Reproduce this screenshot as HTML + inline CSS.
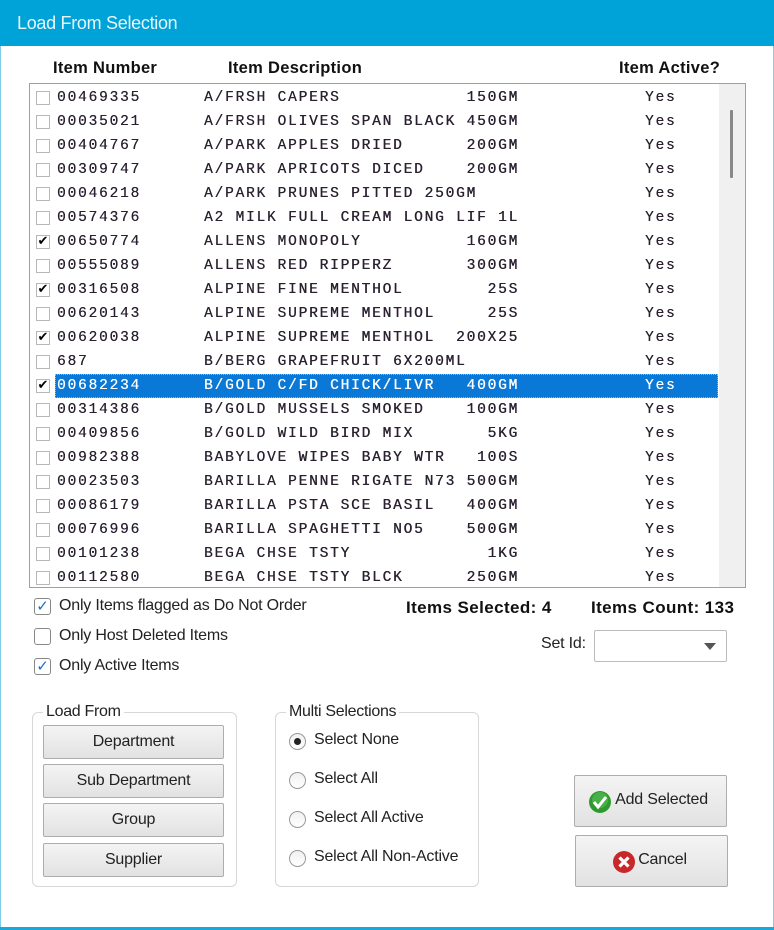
<!DOCTYPE html>
<html><head><style>
*{margin:0;padding:0;box-sizing:border-box}
body{width:774px;height:930px;background:#fff;position:relative;overflow:hidden;font-family:"Liberation Sans",sans-serif}
.a{position:absolute}
.title{left:0;top:0;width:774px;height:46px;background:#00a3d7;color:#e8f6fc;font-size:18px;padding:13px 0 0 17px;letter-spacing:-0.3px}
.hdr{font-weight:bold;font-size:16.5px;color:#111;top:59px;letter-spacing:0.3px}
.list{left:29px;top:83px;width:717px;height:505px;border:1px solid #a0a0a0;overflow:hidden}
.sb{left:689px;top:0;width:27px;height:503px;background:#f0f0f0}
.row{position:absolute;left:0;width:690px;height:24px;font-family:"Liberation Mono",monospace;font-size:14.5px;color:#2a2030;white-space:pre}
.row span{position:absolute;top:4px;letter-spacing:1.8px;text-shadow:0.3px 0 0 currentColor}
.cb{position:absolute;left:6px;top:5px;width:14px;height:14px;border:1px solid #b8b8b8;background:#fff;font-size:13px;line-height:12px;color:#000;font-family:"DejaVu Sans",sans-serif;text-align:center;letter-spacing:0!important}
.sel span{color:#fff}
.selbg{position:absolute;left:25px;top:0;width:663px;height:24px;background:#0a78d6;border:1px dotted #f0a050}
.lbl{font-size:16px;color:#222;letter-spacing:-0.2px}
.chk{width:17px;height:17px;border:1px solid #888;border-radius:3px;background:#fff;font-family:"DejaVu Sans",sans-serif;color:#1a70c8;font-size:15px;line-height:15px;text-align:center;font-weight:bold}
.btn{background:linear-gradient(#f4f4f4,#e2e2e2);border:1px solid #adadad;border-radius:2px;text-align:center;font-size:16px;color:#222;letter-spacing:-0.2px}
.grp{border:1px solid #d8d8d8;border-radius:6px}
.gl{background:#fff;padding:0 3px;font-size:16px;color:#222;letter-spacing:-0.3px}
.rad{width:17px;height:17px;border:1px solid #999;border-radius:50%;background:linear-gradient(#f0f0f0,#fff)}
.bold{font-weight:bold;font-size:17px;letter-spacing:0.4px;color:#111}
</style></head><body>
<div class="a title">Load From Selection</div>
<div class="a" style="left:0;top:46px;width:1px;height:884px;background:#7fcbe8"></div>
<div class="a" style="right:0;top:46px;width:1px;height:884px;background:#7fcbe8"></div>
<div class="a" style="left:0;top:927px;width:774px;height:3px;background:#1aa8da"></div>
<div class="a hdr" style="left:53px">Item Number</div>
<div class="a hdr" style="left:228px">Item Description</div>
<div class="a hdr" style="left:619px">Item Active?</div>
<div class="a list">
<div class="a sb"><div class="a" style="left:11px;top:26px;width:3px;height:68px;background:#888;border-radius:1px"></div></div>
<div class="row" style="top:2px"><div class="cb"></div><span style="left:27px">00469335</span><span style="left:174px">A/FRSH CAPERS            150GM</span><span style="left:615px">Yes</span></div>
<div class="row" style="top:26px"><div class="cb"></div><span style="left:27px">00035021</span><span style="left:174px">A/FRSH OLIVES SPAN BLACK 450GM</span><span style="left:615px">Yes</span></div>
<div class="row" style="top:50px"><div class="cb"></div><span style="left:27px">00404767</span><span style="left:174px">A/PARK APPLES DRIED      200GM</span><span style="left:615px">Yes</span></div>
<div class="row" style="top:74px"><div class="cb"></div><span style="left:27px">00309747</span><span style="left:174px">A/PARK APRICOTS DICED    200GM</span><span style="left:615px">Yes</span></div>
<div class="row" style="top:98px"><div class="cb"></div><span style="left:27px">00046218</span><span style="left:174px">A/PARK PRUNES PITTED 250GM</span><span style="left:615px">Yes</span></div>
<div class="row" style="top:122px"><div class="cb"></div><span style="left:27px">00574376</span><span style="left:174px">A2 MILK FULL CREAM LONG LIF 1L</span><span style="left:615px">Yes</span></div>
<div class="row" style="top:146px"><div class="cb">✔</div><span style="left:27px">00650774</span><span style="left:174px">ALLENS MONOPOLY          160GM</span><span style="left:615px">Yes</span></div>
<div class="row" style="top:170px"><div class="cb"></div><span style="left:27px">00555089</span><span style="left:174px">ALLENS RED RIPPERZ       300GM</span><span style="left:615px">Yes</span></div>
<div class="row" style="top:194px"><div class="cb">✔</div><span style="left:27px">00316508</span><span style="left:174px">ALPINE FINE MENTHOL        25S</span><span style="left:615px">Yes</span></div>
<div class="row" style="top:218px"><div class="cb"></div><span style="left:27px">00620143</span><span style="left:174px">ALPINE SUPREME MENTHOL     25S</span><span style="left:615px">Yes</span></div>
<div class="row" style="top:242px"><div class="cb">✔</div><span style="left:27px">00620038</span><span style="left:174px">ALPINE SUPREME MENTHOL  200X25</span><span style="left:615px">Yes</span></div>
<div class="row" style="top:266px"><div class="cb"></div><span style="left:27px">687</span><span style="left:174px">B/BERG GRAPEFRUIT 6X200ML</span><span style="left:615px">Yes</span></div>
<div class="row sel" style="top:290px"><div class="selbg"></div><div class="cb">✔</div><span style="left:27px">00682234</span><span style="left:174px">B/GOLD C/FD CHICK/LIVR   400GM</span><span style="left:615px">Yes</span></div>
<div class="row" style="top:314px"><div class="cb"></div><span style="left:27px">00314386</span><span style="left:174px">B/GOLD MUSSELS SMOKED    100GM</span><span style="left:615px">Yes</span></div>
<div class="row" style="top:338px"><div class="cb"></div><span style="left:27px">00409856</span><span style="left:174px">B/GOLD WILD BIRD MIX       5KG</span><span style="left:615px">Yes</span></div>
<div class="row" style="top:362px"><div class="cb"></div><span style="left:27px">00982388</span><span style="left:174px">BABYLOVE WIPES BABY WTR   100S</span><span style="left:615px">Yes</span></div>
<div class="row" style="top:386px"><div class="cb"></div><span style="left:27px">00023503</span><span style="left:174px">BARILLA PENNE RIGATE N73 500GM</span><span style="left:615px">Yes</span></div>
<div class="row" style="top:410px"><div class="cb"></div><span style="left:27px">00086179</span><span style="left:174px">BARILLA PSTA SCE BASIL   400GM</span><span style="left:615px">Yes</span></div>
<div class="row" style="top:434px"><div class="cb"></div><span style="left:27px">00076996</span><span style="left:174px">BARILLA SPAGHETTI NO5    500GM</span><span style="left:615px">Yes</span></div>
<div class="row" style="top:458px"><div class="cb"></div><span style="left:27px">00101238</span><span style="left:174px">BEGA CHSE TSTY             1KG</span><span style="left:615px">Yes</span></div>
<div class="row" style="top:482px"><div class="cb"></div><span style="left:27px">00112580</span><span style="left:174px">BEGA CHSE TSTY BLCK      250GM</span><span style="left:615px">Yes</span></div>
</div>

<div class="a chk" style="left:34px;top:598px">✓</div><div class="a lbl" style="left:59px;top:597px">Only Items flagged as Do Not Order</div>
<div class="a chk" style="left:34px;top:628px"></div><div class="a lbl" style="left:59px;top:627px">Only Host Deleted Items</div>
<div class="a chk" style="left:34px;top:658px">✓</div><div class="a lbl" style="left:59px;top:657px">Only Active Items</div>
<div class="a bold" style="left:406px;top:598px">Items Selected: 4</div>
<div class="a bold" style="left:591px;top:598px">Items Count: 133</div>
<div class="a lbl" style="left:541px;top:635px">Set Id:</div>
<div class="a" style="left:594px;top:630px;width:133px;height:32px;border:1px solid #bbb;border-radius:2px;background:#fff"><div class="a" style="left:109px;top:12px;width:0;height:0;border-left:6px solid transparent;border-right:6px solid transparent;border-top:7px solid #555"></div></div>

<div class="a grp" style="left:32px;top:712px;width:205px;height:175px"></div>
<div class="a gl" style="left:43px;top:703px">Load From</div>
<div class="a btn" style="left:43px;top:725px;width:181px;height:34px;padding-top:7px">Department</div>
<div class="a btn" style="left:43px;top:764px;width:181px;height:34px;padding-top:7px">Sub Department</div>
<div class="a btn" style="left:43px;top:803px;width:181px;height:34px;padding-top:7px">Group</div>
<div class="a btn" style="left:43px;top:843px;width:181px;height:34px;padding-top:7px">Supplier</div>

<div class="a grp" style="left:275px;top:712px;width:204px;height:175px"></div>
<div class="a gl" style="left:286px;top:703px">Multi Selections</div>
<div class="a rad" style="left:289px;top:733px"><div class="a" style="left:4px;top:4px;width:7px;height:7px;border-radius:50%;background:#222"></div></div>
<div class="a lbl" style="left:314px;top:731px">Select None</div>
<div class="a rad" style="left:289px;top:772px"></div><div class="a lbl" style="left:314px;top:770px">Select All</div>
<div class="a rad" style="left:289px;top:811px"></div><div class="a lbl" style="left:314px;top:809px">Select All Active</div>
<div class="a rad" style="left:289px;top:850px"></div><div class="a lbl" style="left:314px;top:848px">Select All Non-Active</div>

<div class="a btn" style="left:574px;top:775px;width:153px;height:52px;padding-top:15px;padding-left:22px">
<svg class="a" style="left:13px;top:14px" width="24" height="24" viewBox="0 0 24 24"><circle cx="12" cy="12" r="11" fill="#2e9a2e"/><circle cx="12" cy="10" r="8" fill="#5cc05c" opacity=".6"/><path d="M6 12l4 5 8-10" stroke="#fff" stroke-width="3" fill="none"/></svg>Add Selected</div>
<div class="a btn" style="left:575px;top:835px;width:153px;height:52px;padding-top:15px;padding-left:22px">
<svg class="a" style="left:36px;top:14px" width="24" height="24" viewBox="0 0 24 24"><circle cx="12" cy="12" r="11" fill="#c8282a"/><path d="M7.5 7.5l9 9M16.5 7.5l-9 9" stroke="#fff" stroke-width="3.2"/></svg>Cancel</div>
</body></html>
